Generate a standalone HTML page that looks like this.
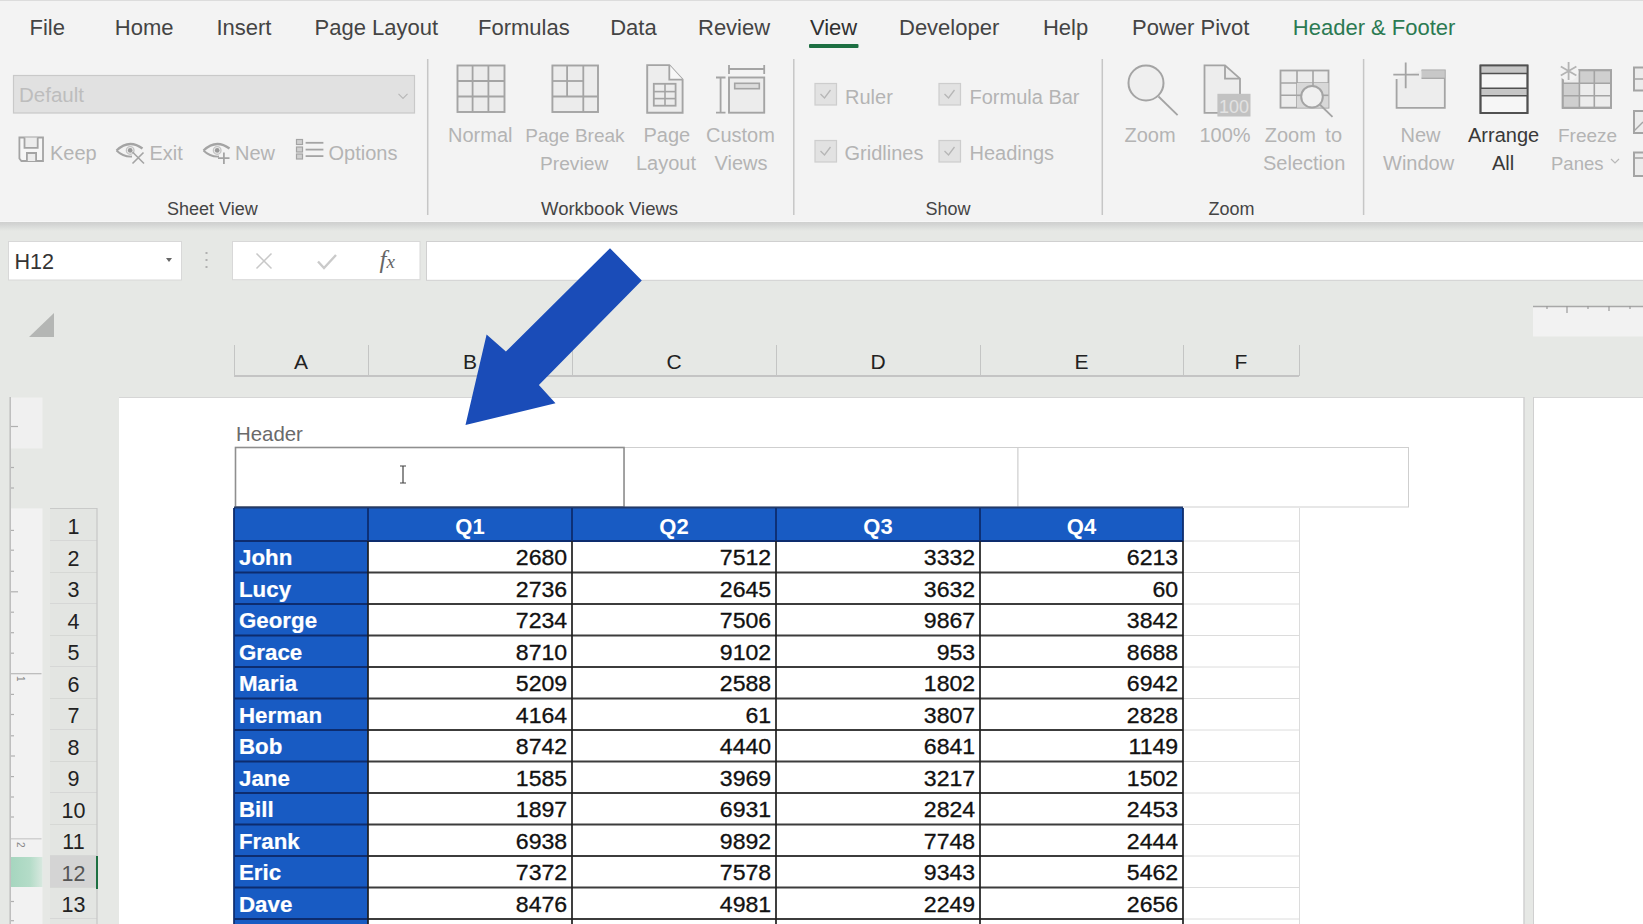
<!DOCTYPE html>
<html><head><meta charset="utf-8"><title>Excel Page Layout</title>
<style>html,body{margin:0;padding:0;width:1643px;height:924px;overflow:hidden;background:#e6e8e5;} svg{display:block}</style>
</head><body>
<svg width="1643" height="924" viewBox="0 0 1643 924" font-family='"Liberation Sans", sans-serif'><rect x="0" y="0" width="1643" height="924" fill="#e6e8e5" stroke="none" stroke-width="1" />
<rect x="0" y="0" width="1643" height="222" fill="#f3f3f3" stroke="none" stroke-width="1" />
<line x1="0" y1="0.5" x2="1643" y2="0.5" stroke="#dcdcdc" stroke-width="1" />
<defs><linearGradient id="sh" x1="0" y1="0" x2="0" y2="1"><stop offset="0" stop-color="#cfd0cf"/><stop offset="0.25" stop-color="#d3d4d3"/><stop offset="0.6" stop-color="#dcdedc"/><stop offset="1" stop-color="#e6e8e5"/></linearGradient></defs>
<rect x="0" y="222" width="1643" height="9" fill="url(#sh)" stroke="none" stroke-width="1" />
<line x1="0" y1="221.5" x2="1643" y2="221.5" stroke="#f7f7f7" stroke-width="1" />
<text x="29.5" y="35.2" font-size="22" fill="#444444" font-weight="400" text-anchor="start" >File</text>
<text x="114.8" y="35.2" font-size="22" fill="#444444" font-weight="400" text-anchor="start" >Home</text>
<text x="216.4" y="35.2" font-size="22" fill="#444444" font-weight="400" text-anchor="start" >Insert</text>
<text x="314.5" y="35.2" font-size="22" fill="#444444" font-weight="400" text-anchor="start" >Page Layout</text>
<text x="478" y="35.2" font-size="22" fill="#444444" font-weight="400" text-anchor="start" >Formulas</text>
<text x="610.2" y="35.2" font-size="22" fill="#444444" font-weight="400" text-anchor="start" >Data</text>
<text x="698" y="35.2" font-size="22" fill="#444444" font-weight="400" text-anchor="start" >Review</text>
<text x="809.9" y="35.2" font-size="22" fill="#303030" font-weight="400" text-anchor="start" >View</text>
<text x="899" y="35.2" font-size="22" fill="#444444" font-weight="400" text-anchor="start" >Developer</text>
<text x="1042.9" y="35.2" font-size="22" fill="#444444" font-weight="400" text-anchor="start" >Help</text>
<text x="1132" y="35.2" font-size="22" fill="#444444" font-weight="400" text-anchor="start" >Power Pivot</text>
<text x="1292.8" y="35.2" font-size="22" fill="#2b7a52" font-weight="400" text-anchor="start" >Header &amp; Footer</text>
<rect x="809" y="44" width="49.5" height="4" fill="#1d6f42" stroke="none" stroke-width="1" rx="1"/>
<rect x="13.5" y="75.5" width="401" height="37.5" fill="#e1e1e1" stroke="#c9c9c9" stroke-width="1.2" />
<text x="19" y="102.4" font-size="20.5" fill="#bdbdbd" font-weight="400" text-anchor="start" >Default</text>
<path d="M398.5 93.8 L403 98.5 L407.5 93.8" fill="none" stroke="#b8b8b8" stroke-width="1.2" />
<text x="50" y="160" font-size="20" fill="#b4b4b4" font-weight="400" text-anchor="start" >Keep</text>
<text x="149.5" y="160" font-size="20" fill="#b4b4b4" font-weight="400" text-anchor="start" >Exit</text>
<text x="235" y="160" font-size="20" fill="#b4b4b4" font-weight="400" text-anchor="start" >New</text>
<text x="328.5" y="160" font-size="20" fill="#b4b4b4" font-weight="400" text-anchor="start" >Options</text>
<text x="167" y="215.3" font-size="18" fill="#444444" font-weight="400" text-anchor="start" >Sheet View</text>
<line x1="427.7" y1="59" x2="427.7" y2="215" stroke="#c6c6c6" stroke-width="1.5" />
<text x="448" y="142.2" font-size="20" fill="#b4b4b4" font-weight="400" text-anchor="start" >Normal</text>
<text x="525.3" y="142.2" font-size="19" fill="#b4b4b4" font-weight="400" text-anchor="start" >Page Break</text>
<text x="540" y="169.6" font-size="19.2" fill="#b4b4b4" font-weight="400" text-anchor="start" >Preview</text>
<text x="643.5" y="142.2" font-size="20" fill="#b4b4b4" font-weight="400" text-anchor="start" >Page</text>
<text x="636" y="169.6" font-size="20" fill="#b4b4b4" font-weight="400" text-anchor="start" >Layout</text>
<text x="706" y="142.2" font-size="20" fill="#b4b4b4" font-weight="400" text-anchor="start" >Custom</text>
<text x="714.5" y="169.6" font-size="20" fill="#b4b4b4" font-weight="400" text-anchor="start" >Views</text>
<text x="541" y="215" font-size="18.5" fill="#444444" font-weight="400" text-anchor="start" >Workbook Views</text>
<line x1="793.8" y1="59" x2="793.8" y2="215" stroke="#c6c6c6" stroke-width="1.5" />
<rect x="815.0" y="83.5" width="21.5" height="21.5" fill="#e2e2e2" stroke="#cdcdcd" stroke-width="1.2" />
<path d="M820.5 94 L824.5 98 L830.5 90" fill="none" stroke="#b6b6b6" stroke-width="1.3" />
<rect x="939.0" y="83.5" width="21.5" height="21.5" fill="#e2e2e2" stroke="#cdcdcd" stroke-width="1.2" />
<path d="M944.5 94 L948.5 98 L954.5 90" fill="none" stroke="#b6b6b6" stroke-width="1.3" />
<rect x="815.0" y="140.5" width="21.5" height="21.5" fill="#e2e2e2" stroke="#cdcdcd" stroke-width="1.2" />
<path d="M820.5 151 L824.5 155 L830.5 147" fill="none" stroke="#b6b6b6" stroke-width="1.3" />
<rect x="939.0" y="140.5" width="21.5" height="21.5" fill="#e2e2e2" stroke="#cdcdcd" stroke-width="1.2" />
<path d="M944.5 151 L948.5 155 L954.5 147" fill="none" stroke="#b6b6b6" stroke-width="1.3" />
<text x="845" y="103.5" font-size="20" fill="#b4b4b4" font-weight="400" text-anchor="start" >Ruler</text>
<text x="969.5" y="103.5" font-size="20" fill="#b4b4b4" font-weight="400" text-anchor="start" >Formula Bar</text>
<text x="844.5" y="160" font-size="20" fill="#b4b4b4" font-weight="400" text-anchor="start" >Gridlines</text>
<text x="969.5" y="160" font-size="20" fill="#b4b4b4" font-weight="400" text-anchor="start" >Headings</text>
<text x="925.5" y="215" font-size="18" fill="#444444" font-weight="400" text-anchor="start" >Show</text>
<line x1="1102.3" y1="59" x2="1102.3" y2="215" stroke="#c6c6c6" stroke-width="1.5" />
<text x="1124.5" y="142.1" font-size="20" fill="#b4b4b4" font-weight="400" text-anchor="start" >Zoom</text>
<text x="1199.5" y="142.1" font-size="20" fill="#b4b4b4" font-weight="400" text-anchor="start" >100%</text>
<text x="1264.7" y="142.1" font-size="20" fill="#b4b4b4" font-weight="400" text-anchor="start" word-spacing="4">Zoom to</text>
<text x="1263" y="169.6" font-size="20" fill="#b4b4b4" font-weight="400" text-anchor="start" >Selection</text>
<text x="1208.4" y="215" font-size="18" fill="#444444" font-weight="400" text-anchor="start" >Zoom</text>
<line x1="1363.6" y1="59" x2="1363.6" y2="215" stroke="#c6c6c6" stroke-width="1.5" />
<text x="1400.5" y="141.7" font-size="20" fill="#b4b4b4" font-weight="400" text-anchor="start" >New</text>
<text x="1383" y="169.6" font-size="20" fill="#b4b4b4" font-weight="400" text-anchor="start" >Window</text>
<text x="1468" y="141.7" font-size="20" fill="#383838" font-weight="400" text-anchor="start" >Arrange</text>
<text x="1492" y="169.6" font-size="20" fill="#383838" font-weight="400" text-anchor="start" >All</text>
<text x="1558" y="141.7" font-size="19" fill="#b4b4b4" font-weight="400" text-anchor="start" >Freeze</text>
<text x="1551" y="169.6" font-size="18.5" fill="#b4b4b4" font-weight="400" text-anchor="start" >Panes</text>
<path d="M1611 159 L1615 163 L1619 159" fill="none" stroke="#b8b8b8" stroke-width="1.2" />
<rect x="8.5" y="241.5" width="173" height="38.5" fill="#ffffff" stroke="#d8d8d8" stroke-width="1" />
<text x="14.5" y="269.4" font-size="21.6" fill="#333333" font-weight="400" text-anchor="start" >H12</text>
<path d="M166 258 L172 258 L169 262 Z" fill="#666666" stroke="none" stroke-width="1" />
<rect x="205.5" y="252" width="2" height="2" fill="#b0b0b0" stroke="none" stroke-width="1" />
<rect x="205.5" y="259" width="2" height="2" fill="#b0b0b0" stroke="none" stroke-width="1" />
<rect x="205.5" y="266" width="2" height="2" fill="#b0b0b0" stroke="none" stroke-width="1" />
<rect x="232.5" y="241.5" width="187.5" height="38.2" fill="#ffffff" stroke="#d8d8d8" stroke-width="1" />
<rect x="426.5" y="241.5" width="1230" height="38.8" fill="#ffffff" stroke="#d0d0d0" stroke-width="1" />
<path d="M256.5 253.5 L271.5 268.5 M271.5 253.5 L256.5 268.5" fill="none" stroke="#c8c8c8" stroke-width="1.5" />
<path d="M318 261.5 L324 268 L336 255" fill="none" stroke="#cacaca" stroke-width="2.4" />
<text x="379.5" y="267.5" font-size="25" fill="#666666" font-weight="400" text-anchor="start" font-family="Liberation Serif"><tspan font-style="italic">f</tspan><tspan font-style="italic" font-size="19" dx="0">x</tspan></text>
<path d="M29 337 L54 313 L54 337 Z" fill="#b4b6b4" stroke="none" stroke-width="1" />
<rect x="1533" y="306" width="110" height="30.5" fill="#f2f2f2" stroke="none" stroke-width="1" />
<line x1="1533" y1="306.5" x2="1643" y2="306.5" stroke="#a8a8a8" stroke-width="1.5" />
<line x1="1547" y1="306" x2="1547" y2="309" stroke="#9a9a9a" stroke-width="1.2" />
<line x1="1567" y1="306" x2="1567" y2="313" stroke="#9a9a9a" stroke-width="1.2" />
<line x1="1588" y1="306" x2="1588" y2="309" stroke="#9a9a9a" stroke-width="1.2" />
<line x1="1609" y1="306" x2="1609" y2="311" stroke="#9a9a9a" stroke-width="1.2" />
<line x1="1630" y1="306" x2="1630" y2="309" stroke="#9a9a9a" stroke-width="1.2" />
<line x1="234" y1="376" x2="1299" y2="376" stroke="#b8b9b8" stroke-width="1.5" />
<line x1="234.5" y1="345" x2="234.5" y2="376" stroke="#c4c5c4" stroke-width="1" />
<line x1="368.5" y1="345" x2="368.5" y2="376" stroke="#c4c5c4" stroke-width="1" />
<line x1="572.5" y1="345" x2="572.5" y2="376" stroke="#c4c5c4" stroke-width="1" />
<line x1="776.5" y1="345" x2="776.5" y2="376" stroke="#c4c5c4" stroke-width="1" />
<line x1="980.5" y1="345" x2="980.5" y2="376" stroke="#c4c5c4" stroke-width="1" />
<line x1="1183.5" y1="345" x2="1183.5" y2="376" stroke="#c4c5c4" stroke-width="1" />
<line x1="1299.5" y1="345" x2="1299.5" y2="376" stroke="#c4c5c4" stroke-width="1" />
<text x="301.0" y="369.1" font-size="21" fill="#222222" font-weight="400" text-anchor="middle" >A</text>
<text x="470.0" y="369.1" font-size="21" fill="#222222" font-weight="400" text-anchor="middle" >B</text>
<text x="674.0" y="369.1" font-size="21" fill="#222222" font-weight="400" text-anchor="middle" >C</text>
<text x="878.0" y="369.1" font-size="21" fill="#222222" font-weight="400" text-anchor="middle" >D</text>
<text x="1081.5" y="369.1" font-size="21" fill="#222222" font-weight="400" text-anchor="middle" >E</text>
<text x="1241.0" y="369.1" font-size="21" fill="#222222" font-weight="400" text-anchor="middle" >F</text>
<rect x="119" y="397" width="1405" height="527" fill="#ffffff" stroke="none" stroke-width="1" />
<line x1="119" y1="397.5" x2="1524" y2="397.5" stroke="#d6d6d6" stroke-width="1" />
<line x1="1524" y1="397" x2="1524" y2="924" stroke="#d0d0d0" stroke-width="1.5" />
<rect x="1533" y="397" width="110" height="527" fill="#ffffff" stroke="none" stroke-width="1" />
<line x1="1533" y1="397.5" x2="1643" y2="397.5" stroke="#d6d6d6" stroke-width="1" />
<line x1="1533.5" y1="397" x2="1533.5" y2="924" stroke="#d0d0d0" stroke-width="1" />
<line x1="10.2" y1="397" x2="10.2" y2="924" stroke="#bdbdbd" stroke-width="1.5" />
<rect x="11" y="397.5" width="31.5" height="51" fill="#f0f0f0" stroke="none" stroke-width="1" />
<rect x="11" y="508.4" width="31.5" height="416" fill="#f2f2f2" stroke="none" stroke-width="1" />
<defs><linearGradient id="gr" x1="0" y1="0" x2="1" y2="0"><stop offset="0" stop-color="#a6d6bf"/><stop offset="0.6" stop-color="#b4dcc8"/><stop offset="1" stop-color="#d8e8df"/></linearGradient></defs>
<rect x="11" y="857" width="31.5" height="30" fill="url(#gr)" stroke="none" stroke-width="1" />
<line x1="11" y1="673.7" x2="41.5" y2="673.7" stroke="#b8b8b8" stroke-width="1.2" />
<line x1="11" y1="838.8" x2="41.5" y2="838.8" stroke="#c8c8c8" stroke-width="1.2" />
<line x1="11" y1="426.5" x2="18" y2="426.5" stroke="#b0b0b0" stroke-width="1.2" />
<line x1="11" y1="467.5" x2="14" y2="467.5" stroke="#b0b0b0" stroke-width="1.2" />
<line x1="11" y1="488" x2="14" y2="488" stroke="#b0b0b0" stroke-width="1.2" />
<line x1="11" y1="530.4" x2="14" y2="530.4" stroke="#b0b0b0" stroke-width="1.2" />
<line x1="11" y1="550.2" x2="14" y2="550.2" stroke="#b0b0b0" stroke-width="1.2" />
<line x1="11" y1="571.3" x2="14" y2="571.3" stroke="#b0b0b0" stroke-width="1.2" />
<line x1="11" y1="591.8" x2="18" y2="591.8" stroke="#b0b0b0" stroke-width="1.2" />
<line x1="11" y1="612.2" x2="14" y2="612.2" stroke="#b0b0b0" stroke-width="1.2" />
<line x1="11" y1="632.7" x2="14" y2="632.7" stroke="#b0b0b0" stroke-width="1.2" />
<line x1="11" y1="653.2" x2="14" y2="653.2" stroke="#b0b0b0" stroke-width="1.2" />
<line x1="11" y1="694.4" x2="14" y2="694.4" stroke="#b0b0b0" stroke-width="1.2" />
<line x1="11" y1="714.5" x2="14" y2="714.5" stroke="#b0b0b0" stroke-width="1.2" />
<line x1="11" y1="735.8" x2="14" y2="735.8" stroke="#b0b0b0" stroke-width="1.2" />
<line x1="11" y1="756" x2="15" y2="756" stroke="#b0b0b0" stroke-width="1.2" />
<line x1="11" y1="776.6" x2="14" y2="776.6" stroke="#b0b0b0" stroke-width="1.2" />
<line x1="11" y1="797" x2="14" y2="797" stroke="#b0b0b0" stroke-width="1.2" />
<line x1="11" y1="817" x2="14" y2="817" stroke="#b0b0b0" stroke-width="1.2" />
<line x1="11" y1="901.5" x2="14" y2="901.5" stroke="#b0b0b0" stroke-width="1.2" />
<line x1="11" y1="920.7" x2="14" y2="920.7" stroke="#b0b0b0" stroke-width="1.2" />
<text x="0" y="0" font-size="10" fill="#888888" font-weight="400" text-anchor="start" transform="translate(17 676) rotate(90)">1</text>
<text x="0" y="0" font-size="10" fill="#888888" font-weight="400" text-anchor="start" transform="translate(17 842) rotate(90)">2</text>
<rect x="50" y="508" width="47" height="33.0" fill="#e3e5e2" stroke="none" stroke-width="1" />
<line x1="50" y1="541.0" x2="97" y2="541.0" stroke="#c9cac9" stroke-width="1.2" />
<text x="73.5" y="534" font-size="21.5" fill="#222222" font-weight="400" text-anchor="middle" >1</text>
<rect x="50" y="541.0" width="47" height="31.5" fill="#e3e5e2" stroke="none" stroke-width="1" />
<line x1="50" y1="572.5" x2="97" y2="572.5" stroke="#c9cac9" stroke-width="1.2" />
<text x="73.5" y="565.6" font-size="21.5" fill="#222222" font-weight="400" text-anchor="middle" >2</text>
<rect x="50" y="572.5" width="47" height="31.5" fill="#e3e5e2" stroke="none" stroke-width="1" />
<line x1="50" y1="604.0" x2="97" y2="604.0" stroke="#c9cac9" stroke-width="1.2" />
<text x="73.5" y="597.1" font-size="21.5" fill="#222222" font-weight="400" text-anchor="middle" >3</text>
<rect x="50" y="604.0" width="47" height="31.5" fill="#e3e5e2" stroke="none" stroke-width="1" />
<line x1="50" y1="635.5" x2="97" y2="635.5" stroke="#c9cac9" stroke-width="1.2" />
<text x="73.5" y="628.6" font-size="21.5" fill="#222222" font-weight="400" text-anchor="middle" >4</text>
<rect x="50" y="635.5" width="47" height="31.5" fill="#e3e5e2" stroke="none" stroke-width="1" />
<line x1="50" y1="667.0" x2="97" y2="667.0" stroke="#c9cac9" stroke-width="1.2" />
<text x="73.5" y="660.1" font-size="21.5" fill="#222222" font-weight="400" text-anchor="middle" >5</text>
<rect x="50" y="667.0" width="47" height="31.5" fill="#e3e5e2" stroke="none" stroke-width="1" />
<line x1="50" y1="698.5" x2="97" y2="698.5" stroke="#c9cac9" stroke-width="1.2" />
<text x="73.5" y="691.6" font-size="21.5" fill="#222222" font-weight="400" text-anchor="middle" >6</text>
<rect x="50" y="698.5" width="47" height="31.5" fill="#e3e5e2" stroke="none" stroke-width="1" />
<line x1="50" y1="730.0" x2="97" y2="730.0" stroke="#c9cac9" stroke-width="1.2" />
<text x="73.5" y="723.1" font-size="21.5" fill="#222222" font-weight="400" text-anchor="middle" >7</text>
<rect x="50" y="730.0" width="47" height="31.5" fill="#e3e5e2" stroke="none" stroke-width="1" />
<line x1="50" y1="761.5" x2="97" y2="761.5" stroke="#c9cac9" stroke-width="1.2" />
<text x="73.5" y="754.6" font-size="21.5" fill="#222222" font-weight="400" text-anchor="middle" >8</text>
<rect x="50" y="761.5" width="47" height="31.5" fill="#e3e5e2" stroke="none" stroke-width="1" />
<line x1="50" y1="793.0" x2="97" y2="793.0" stroke="#c9cac9" stroke-width="1.2" />
<text x="73.5" y="786.1" font-size="21.5" fill="#222222" font-weight="400" text-anchor="middle" >9</text>
<rect x="50" y="793.0" width="47" height="31.5" fill="#e3e5e2" stroke="none" stroke-width="1" />
<line x1="50" y1="824.5" x2="97" y2="824.5" stroke="#c9cac9" stroke-width="1.2" />
<text x="73.5" y="817.6" font-size="21.5" fill="#222222" font-weight="400" text-anchor="middle" >10</text>
<rect x="50" y="824.5" width="47" height="31.5" fill="#e3e5e2" stroke="none" stroke-width="1" />
<line x1="50" y1="856.0" x2="97" y2="856.0" stroke="#c9cac9" stroke-width="1.2" />
<text x="73.5" y="849.1" font-size="21.5" fill="#222222" font-weight="400" text-anchor="middle" >11</text>
<rect x="50" y="856.0" width="47" height="31.5" fill="#d4d4d4" stroke="none" stroke-width="1" />
<line x1="50" y1="887.5" x2="97" y2="887.5" stroke="#c9cac9" stroke-width="1.2" />
<text x="73.5" y="880.6" font-size="21.5" fill="#555555" font-weight="400" text-anchor="middle" >12</text>
<rect x="50" y="887.5" width="47" height="31.5" fill="#e3e5e2" stroke="none" stroke-width="1" />
<line x1="50" y1="919.0" x2="97" y2="919.0" stroke="#c9cac9" stroke-width="1.2" />
<text x="73.5" y="912.1" font-size="21.5" fill="#222222" font-weight="400" text-anchor="middle" >13</text>
<rect x="50" y="919.0" width="47" height="31.5" fill="#e3e5e2" stroke="none" stroke-width="1" />
<line x1="50" y1="950.5" x2="97" y2="950.5" stroke="#c9cac9" stroke-width="1.2" />
<text x="73.5" y="943.6" font-size="21.5" fill="#222222" font-weight="400" text-anchor="middle" >14</text>
<line x1="50" y1="508.5" x2="97" y2="508.5" stroke="#c9cac9" stroke-width="1" />
<line x1="97" y1="508" x2="97" y2="924" stroke="#c6c7c6" stroke-width="1.2" />
<line x1="97" y1="856" x2="97" y2="889" stroke="#1d6f42" stroke-width="2" />
<text x="236" y="441" font-size="20.4" fill="#6a6a6a" font-weight="400" text-anchor="start" >Header</text>
<rect x="624" y="447.5" width="394" height="59.5" fill="#ffffff" stroke="#cfcfcf" stroke-width="1" />
<rect x="1018" y="447.5" width="390.5" height="59.5" fill="#ffffff" stroke="#cfcfcf" stroke-width="1" />
<rect x="235.5" y="447.5" width="388.5" height="59.5" fill="#ffffff" stroke="#8f8f8f" stroke-width="1.6" />
<path d="M400 466 L406 466 M403 466 L403 483 M400 483 L406 483" fill="none" stroke="#444" stroke-width="1.2" />
<line x1="1183" y1="541.0" x2="1299" y2="541.0" stroke="#dcdcdc" stroke-width="1" />
<line x1="1183" y1="572.5" x2="1299" y2="572.5" stroke="#dcdcdc" stroke-width="1" />
<line x1="1183" y1="604.0" x2="1299" y2="604.0" stroke="#dcdcdc" stroke-width="1" />
<line x1="1183" y1="635.5" x2="1299" y2="635.5" stroke="#dcdcdc" stroke-width="1" />
<line x1="1183" y1="667.0" x2="1299" y2="667.0" stroke="#dcdcdc" stroke-width="1" />
<line x1="1183" y1="698.5" x2="1299" y2="698.5" stroke="#dcdcdc" stroke-width="1" />
<line x1="1183" y1="730.0" x2="1299" y2="730.0" stroke="#dcdcdc" stroke-width="1" />
<line x1="1183" y1="761.5" x2="1299" y2="761.5" stroke="#dcdcdc" stroke-width="1" />
<line x1="1183" y1="793.0" x2="1299" y2="793.0" stroke="#dcdcdc" stroke-width="1" />
<line x1="1183" y1="824.5" x2="1299" y2="824.5" stroke="#dcdcdc" stroke-width="1" />
<line x1="1183" y1="856.0" x2="1299" y2="856.0" stroke="#dcdcdc" stroke-width="1" />
<line x1="1183" y1="887.5" x2="1299" y2="887.5" stroke="#dcdcdc" stroke-width="1" />
<line x1="1183" y1="919.0" x2="1299" y2="919.0" stroke="#dcdcdc" stroke-width="1" />
<line x1="1183" y1="950.5" x2="1299" y2="950.5" stroke="#dcdcdc" stroke-width="1" />
<line x1="1299.5" y1="508" x2="1299.5" y2="924" stroke="#dcdcdc" stroke-width="1" />
<rect x="234" y="508" width="949" height="33" fill="#185bc3" stroke="none" stroke-width="1" />
<rect x="234" y="541" width="134" height="383" fill="#185bc3" stroke="none" stroke-width="1" />
<text x="470.0" y="534.2" font-size="22" fill="#ffffff" font-weight="700" text-anchor="middle" >Q1</text>
<text x="674.0" y="534.2" font-size="22" fill="#ffffff" font-weight="700" text-anchor="middle" >Q2</text>
<text x="878.0" y="534.2" font-size="22" fill="#ffffff" font-weight="700" text-anchor="middle" >Q3</text>
<text x="1081.5" y="534.2" font-size="22" fill="#ffffff" font-weight="700" text-anchor="middle" >Q4</text>
<text x="239" y="565.4" font-size="22.3" fill="#ffffff" font-weight="700" text-anchor="start" stroke="#ffffff" stroke-width="0.2">John</text>
<text transform="translate(567.2 565.4) scale(1.05 1)" x="0" y="0" font-size="22" fill="#111111" stroke="#111111" stroke-width="0.3" text-anchor="end">2680</text>
<text transform="translate(771.2 565.4) scale(1.05 1)" x="0" y="0" font-size="22" fill="#111111" stroke="#111111" stroke-width="0.3" text-anchor="end">7512</text>
<text transform="translate(975.2 565.4) scale(1.05 1)" x="0" y="0" font-size="22" fill="#111111" stroke="#111111" stroke-width="0.3" text-anchor="end">3332</text>
<text transform="translate(1178.2 565.4) scale(1.05 1)" x="0" y="0" font-size="22" fill="#111111" stroke="#111111" stroke-width="0.3" text-anchor="end">6213</text>
<text x="239" y="596.9" font-size="22.3" fill="#ffffff" font-weight="700" text-anchor="start" stroke="#ffffff" stroke-width="0.2">Lucy</text>
<text transform="translate(567.2 596.9) scale(1.05 1)" x="0" y="0" font-size="22" fill="#111111" stroke="#111111" stroke-width="0.3" text-anchor="end">2736</text>
<text transform="translate(771.2 596.9) scale(1.05 1)" x="0" y="0" font-size="22" fill="#111111" stroke="#111111" stroke-width="0.3" text-anchor="end">2645</text>
<text transform="translate(975.2 596.9) scale(1.05 1)" x="0" y="0" font-size="22" fill="#111111" stroke="#111111" stroke-width="0.3" text-anchor="end">3632</text>
<text transform="translate(1178.2 596.9) scale(1.05 1)" x="0" y="0" font-size="22" fill="#111111" stroke="#111111" stroke-width="0.3" text-anchor="end">60</text>
<text x="239" y="628.4" font-size="22.3" fill="#ffffff" font-weight="700" text-anchor="start" stroke="#ffffff" stroke-width="0.2">George</text>
<text transform="translate(567.2 628.4) scale(1.05 1)" x="0" y="0" font-size="22" fill="#111111" stroke="#111111" stroke-width="0.3" text-anchor="end">7234</text>
<text transform="translate(771.2 628.4) scale(1.05 1)" x="0" y="0" font-size="22" fill="#111111" stroke="#111111" stroke-width="0.3" text-anchor="end">7506</text>
<text transform="translate(975.2 628.4) scale(1.05 1)" x="0" y="0" font-size="22" fill="#111111" stroke="#111111" stroke-width="0.3" text-anchor="end">9867</text>
<text transform="translate(1178.2 628.4) scale(1.05 1)" x="0" y="0" font-size="22" fill="#111111" stroke="#111111" stroke-width="0.3" text-anchor="end">3842</text>
<text x="239" y="659.9" font-size="22.3" fill="#ffffff" font-weight="700" text-anchor="start" stroke="#ffffff" stroke-width="0.2">Grace</text>
<text transform="translate(567.2 659.9) scale(1.05 1)" x="0" y="0" font-size="22" fill="#111111" stroke="#111111" stroke-width="0.3" text-anchor="end">8710</text>
<text transform="translate(771.2 659.9) scale(1.05 1)" x="0" y="0" font-size="22" fill="#111111" stroke="#111111" stroke-width="0.3" text-anchor="end">9102</text>
<text transform="translate(975.2 659.9) scale(1.05 1)" x="0" y="0" font-size="22" fill="#111111" stroke="#111111" stroke-width="0.3" text-anchor="end">953</text>
<text transform="translate(1178.2 659.9) scale(1.05 1)" x="0" y="0" font-size="22" fill="#111111" stroke="#111111" stroke-width="0.3" text-anchor="end">8688</text>
<text x="239" y="691.4" font-size="22.3" fill="#ffffff" font-weight="700" text-anchor="start" stroke="#ffffff" stroke-width="0.2">Maria</text>
<text transform="translate(567.2 691.4) scale(1.05 1)" x="0" y="0" font-size="22" fill="#111111" stroke="#111111" stroke-width="0.3" text-anchor="end">5209</text>
<text transform="translate(771.2 691.4) scale(1.05 1)" x="0" y="0" font-size="22" fill="#111111" stroke="#111111" stroke-width="0.3" text-anchor="end">2588</text>
<text transform="translate(975.2 691.4) scale(1.05 1)" x="0" y="0" font-size="22" fill="#111111" stroke="#111111" stroke-width="0.3" text-anchor="end">1802</text>
<text transform="translate(1178.2 691.4) scale(1.05 1)" x="0" y="0" font-size="22" fill="#111111" stroke="#111111" stroke-width="0.3" text-anchor="end">6942</text>
<text x="239" y="722.9" font-size="22.3" fill="#ffffff" font-weight="700" text-anchor="start" stroke="#ffffff" stroke-width="0.2">Herman</text>
<text transform="translate(567.2 722.9) scale(1.05 1)" x="0" y="0" font-size="22" fill="#111111" stroke="#111111" stroke-width="0.3" text-anchor="end">4164</text>
<text transform="translate(771.2 722.9) scale(1.05 1)" x="0" y="0" font-size="22" fill="#111111" stroke="#111111" stroke-width="0.3" text-anchor="end">61</text>
<text transform="translate(975.2 722.9) scale(1.05 1)" x="0" y="0" font-size="22" fill="#111111" stroke="#111111" stroke-width="0.3" text-anchor="end">3807</text>
<text transform="translate(1178.2 722.9) scale(1.05 1)" x="0" y="0" font-size="22" fill="#111111" stroke="#111111" stroke-width="0.3" text-anchor="end">2828</text>
<text x="239" y="754.4" font-size="22.3" fill="#ffffff" font-weight="700" text-anchor="start" stroke="#ffffff" stroke-width="0.2">Bob</text>
<text transform="translate(567.2 754.4) scale(1.05 1)" x="0" y="0" font-size="22" fill="#111111" stroke="#111111" stroke-width="0.3" text-anchor="end">8742</text>
<text transform="translate(771.2 754.4) scale(1.05 1)" x="0" y="0" font-size="22" fill="#111111" stroke="#111111" stroke-width="0.3" text-anchor="end">4440</text>
<text transform="translate(975.2 754.4) scale(1.05 1)" x="0" y="0" font-size="22" fill="#111111" stroke="#111111" stroke-width="0.3" text-anchor="end">6841</text>
<text transform="translate(1178.2 754.4) scale(1.05 1)" x="0" y="0" font-size="22" fill="#111111" stroke="#111111" stroke-width="0.3" text-anchor="end">1149</text>
<text x="239" y="785.9" font-size="22.3" fill="#ffffff" font-weight="700" text-anchor="start" stroke="#ffffff" stroke-width="0.2">Jane</text>
<text transform="translate(567.2 785.9) scale(1.05 1)" x="0" y="0" font-size="22" fill="#111111" stroke="#111111" stroke-width="0.3" text-anchor="end">1585</text>
<text transform="translate(771.2 785.9) scale(1.05 1)" x="0" y="0" font-size="22" fill="#111111" stroke="#111111" stroke-width="0.3" text-anchor="end">3969</text>
<text transform="translate(975.2 785.9) scale(1.05 1)" x="0" y="0" font-size="22" fill="#111111" stroke="#111111" stroke-width="0.3" text-anchor="end">3217</text>
<text transform="translate(1178.2 785.9) scale(1.05 1)" x="0" y="0" font-size="22" fill="#111111" stroke="#111111" stroke-width="0.3" text-anchor="end">1502</text>
<text x="239" y="817.4" font-size="22.3" fill="#ffffff" font-weight="700" text-anchor="start" stroke="#ffffff" stroke-width="0.2">Bill</text>
<text transform="translate(567.2 817.4) scale(1.05 1)" x="0" y="0" font-size="22" fill="#111111" stroke="#111111" stroke-width="0.3" text-anchor="end">1897</text>
<text transform="translate(771.2 817.4) scale(1.05 1)" x="0" y="0" font-size="22" fill="#111111" stroke="#111111" stroke-width="0.3" text-anchor="end">6931</text>
<text transform="translate(975.2 817.4) scale(1.05 1)" x="0" y="0" font-size="22" fill="#111111" stroke="#111111" stroke-width="0.3" text-anchor="end">2824</text>
<text transform="translate(1178.2 817.4) scale(1.05 1)" x="0" y="0" font-size="22" fill="#111111" stroke="#111111" stroke-width="0.3" text-anchor="end">2453</text>
<text x="239" y="848.9" font-size="22.3" fill="#ffffff" font-weight="700" text-anchor="start" stroke="#ffffff" stroke-width="0.2">Frank</text>
<text transform="translate(567.2 848.9) scale(1.05 1)" x="0" y="0" font-size="22" fill="#111111" stroke="#111111" stroke-width="0.3" text-anchor="end">6938</text>
<text transform="translate(771.2 848.9) scale(1.05 1)" x="0" y="0" font-size="22" fill="#111111" stroke="#111111" stroke-width="0.3" text-anchor="end">9892</text>
<text transform="translate(975.2 848.9) scale(1.05 1)" x="0" y="0" font-size="22" fill="#111111" stroke="#111111" stroke-width="0.3" text-anchor="end">7748</text>
<text transform="translate(1178.2 848.9) scale(1.05 1)" x="0" y="0" font-size="22" fill="#111111" stroke="#111111" stroke-width="0.3" text-anchor="end">2444</text>
<text x="239" y="880.4" font-size="22.3" fill="#ffffff" font-weight="700" text-anchor="start" stroke="#ffffff" stroke-width="0.2">Eric</text>
<text transform="translate(567.2 880.4) scale(1.05 1)" x="0" y="0" font-size="22" fill="#111111" stroke="#111111" stroke-width="0.3" text-anchor="end">7372</text>
<text transform="translate(771.2 880.4) scale(1.05 1)" x="0" y="0" font-size="22" fill="#111111" stroke="#111111" stroke-width="0.3" text-anchor="end">7578</text>
<text transform="translate(975.2 880.4) scale(1.05 1)" x="0" y="0" font-size="22" fill="#111111" stroke="#111111" stroke-width="0.3" text-anchor="end">9343</text>
<text transform="translate(1178.2 880.4) scale(1.05 1)" x="0" y="0" font-size="22" fill="#111111" stroke="#111111" stroke-width="0.3" text-anchor="end">5462</text>
<text x="239" y="911.9" font-size="22.3" fill="#ffffff" font-weight="700" text-anchor="start" stroke="#ffffff" stroke-width="0.2">Dave</text>
<text transform="translate(567.2 911.9) scale(1.05 1)" x="0" y="0" font-size="22" fill="#111111" stroke="#111111" stroke-width="0.3" text-anchor="end">8476</text>
<text transform="translate(771.2 911.9) scale(1.05 1)" x="0" y="0" font-size="22" fill="#111111" stroke="#111111" stroke-width="0.3" text-anchor="end">4981</text>
<text transform="translate(975.2 911.9) scale(1.05 1)" x="0" y="0" font-size="22" fill="#111111" stroke="#111111" stroke-width="0.3" text-anchor="end">2249</text>
<text transform="translate(1178.2 911.9) scale(1.05 1)" x="0" y="0" font-size="22" fill="#111111" stroke="#111111" stroke-width="0.3" text-anchor="end">2656</text>
<line x1="234" y1="541.0" x2="1183" y2="541.0" stroke="#0d2c6e" stroke-width="2" />
<line x1="234" y1="572.5" x2="368" y2="572.5" stroke="#0d2c6e" stroke-width="2" />
<line x1="368" y1="572.5" x2="1183" y2="572.5" stroke="#3c3c3c" stroke-width="1.8" />
<line x1="234" y1="604.0" x2="368" y2="604.0" stroke="#0d2c6e" stroke-width="2" />
<line x1="368" y1="604.0" x2="1183" y2="604.0" stroke="#3c3c3c" stroke-width="1.8" />
<line x1="234" y1="635.5" x2="368" y2="635.5" stroke="#0d2c6e" stroke-width="2" />
<line x1="368" y1="635.5" x2="1183" y2="635.5" stroke="#3c3c3c" stroke-width="1.8" />
<line x1="234" y1="667.0" x2="368" y2="667.0" stroke="#0d2c6e" stroke-width="2" />
<line x1="368" y1="667.0" x2="1183" y2="667.0" stroke="#3c3c3c" stroke-width="1.8" />
<line x1="234" y1="698.5" x2="368" y2="698.5" stroke="#0d2c6e" stroke-width="2" />
<line x1="368" y1="698.5" x2="1183" y2="698.5" stroke="#3c3c3c" stroke-width="1.8" />
<line x1="234" y1="730.0" x2="368" y2="730.0" stroke="#0d2c6e" stroke-width="2" />
<line x1="368" y1="730.0" x2="1183" y2="730.0" stroke="#3c3c3c" stroke-width="1.8" />
<line x1="234" y1="761.5" x2="368" y2="761.5" stroke="#0d2c6e" stroke-width="2" />
<line x1="368" y1="761.5" x2="1183" y2="761.5" stroke="#3c3c3c" stroke-width="1.8" />
<line x1="234" y1="793.0" x2="368" y2="793.0" stroke="#0d2c6e" stroke-width="2" />
<line x1="368" y1="793.0" x2="1183" y2="793.0" stroke="#3c3c3c" stroke-width="1.8" />
<line x1="234" y1="824.5" x2="368" y2="824.5" stroke="#0d2c6e" stroke-width="2" />
<line x1="368" y1="824.5" x2="1183" y2="824.5" stroke="#3c3c3c" stroke-width="1.8" />
<line x1="234" y1="856.0" x2="368" y2="856.0" stroke="#0d2c6e" stroke-width="2" />
<line x1="368" y1="856.0" x2="1183" y2="856.0" stroke="#3c3c3c" stroke-width="1.8" />
<line x1="234" y1="887.5" x2="368" y2="887.5" stroke="#0d2c6e" stroke-width="2" />
<line x1="368" y1="887.5" x2="1183" y2="887.5" stroke="#3c3c3c" stroke-width="1.8" />
<line x1="234" y1="919.0" x2="368" y2="919.0" stroke="#0d2c6e" stroke-width="2" />
<line x1="368" y1="919.0" x2="1183" y2="919.0" stroke="#3c3c3c" stroke-width="1.8" />
<line x1="234" y1="950.5" x2="368" y2="950.5" stroke="#0d2c6e" stroke-width="2" />
<line x1="368" y1="950.5" x2="1183" y2="950.5" stroke="#3c3c3c" stroke-width="1.8" />
<line x1="234" y1="507.5" x2="1183" y2="507.5" stroke="#223a6a" stroke-width="2" />
<line x1="234" y1="541" x2="234" y2="924" stroke="#0d2c6e" stroke-width="1.7" />
<line x1="368" y1="541" x2="368" y2="924" stroke="#1e1e1e" stroke-width="1.7" />
<line x1="572" y1="541" x2="572" y2="924" stroke="#1e1e1e" stroke-width="1.7" />
<line x1="776" y1="541" x2="776" y2="924" stroke="#1e1e1e" stroke-width="1.7" />
<line x1="980" y1="541" x2="980" y2="924" stroke="#1e1e1e" stroke-width="1.7" />
<line x1="1183" y1="541" x2="1183" y2="924" stroke="#1e1e1e" stroke-width="1.7" />
<line x1="234" y1="508" x2="234" y2="541" stroke="#0d2c6e" stroke-width="1.8" />
<line x1="368" y1="508" x2="368" y2="541" stroke="#0d2c6e" stroke-width="1.8" />
<line x1="572" y1="508" x2="572" y2="541" stroke="#0d2c6e" stroke-width="1.8" />
<line x1="776" y1="508" x2="776" y2="541" stroke="#0d2c6e" stroke-width="1.8" />
<line x1="980" y1="508" x2="980" y2="541" stroke="#0d2c6e" stroke-width="1.8" />
<line x1="1183" y1="508" x2="1183" y2="541" stroke="#0d2c6e" stroke-width="1.8" />
<path d="M465.5 425 L555.5 403.2 L538.9 385 L641.8 280.5 L610 248.2 L505.9 351.6 L486.6 334.5 Z" fill="#1a4cb8" stroke="none" stroke-width="1" />
<path d="M19.4 137.5 L43 137.5 L43 161 L21.4 161 L19.4 158.5 Z" fill="#f6f6f6" stroke="#a4a4a4" stroke-width="1.8" />
<path d="M24.5 137.5 L24.5 147.8 L37.7 147.8 L37.7 137.5" fill="#ececec" stroke="#a4a4a4" stroke-width="1.8" />
<path d="M26.9 161 L26.9 153 L36.1 153 L36.1 161" fill="#ececec" stroke="#a4a4a4" stroke-width="1.8" />
<path d="M116.5 150.5 Q129 138.5 142.5 148.5" fill="none" stroke="#a4a4a4" stroke-width="2.3" />
<path d="M116.5 150.5 Q123 157 132 156.5" fill="none" stroke="#a4a4a4" stroke-width="1.8" />
<circle cx="130.2" cy="150.4" r="3.8" fill="none" stroke="#c4c4c4" stroke-width="1.4"/>
<circle cx="130.2" cy="150.4" r="2.4" fill="#999999"/>
<path d="M132.5 152 L144 163.5 M143.5 152.5 L132.5 163.5" fill="none" stroke="#a4a4a4" stroke-width="1.6" />
<path d="M203.5 150.5 Q216 138.5 229.5 148.5" fill="none" stroke="#a4a4a4" stroke-width="2.3" />
<path d="M203.5 150.5 Q210 157 219 156.5" fill="none" stroke="#a4a4a4" stroke-width="1.8" />
<circle cx="217.2" cy="150.4" r="3.8" fill="none" stroke="#c4c4c4" stroke-width="1.4"/>
<circle cx="217.2" cy="150.4" r="2.4" fill="#999999"/>
<path d="M223.9 152.5 L223.9 164 M218 158.2 L229.5 158.2" fill="none" stroke="#a4a4a4" stroke-width="1.8" />
<rect x="296.5" y="139.5" width="6" height="5" fill="#d0d0d0" stroke="#a4a4a4" stroke-width="1.2" />
<rect x="296.5" y="147" width="6" height="5" fill="#d0d0d0" stroke="#a4a4a4" stroke-width="1.2" />
<rect x="296.5" y="154" width="6" height="5" fill="#d0d0d0" stroke="#a4a4a4" stroke-width="1.2" />
<line x1="305.6" y1="142.8" x2="323.4" y2="142.8" stroke="#a4a4a4" stroke-width="1.8" />
<line x1="305.6" y1="149.6" x2="323.4" y2="149.6" stroke="#a4a4a4" stroke-width="1.8" />
<line x1="305.6" y1="156.1" x2="323.4" y2="156.1" stroke="#a4a4a4" stroke-width="1.8" />
<rect x="457.5" y="65.5" width="47" height="46.5" fill="#ececec" stroke="#a4a4a4" stroke-width="1.9" />
<line x1="472.6" y1="65.5" x2="472.6" y2="112" stroke="#a4a4a4" stroke-width="1.8" />
<line x1="488.4" y1="65.5" x2="488.4" y2="112" stroke="#a4a4a4" stroke-width="1.8" />
<line x1="457.5" y1="81" x2="504.5" y2="81" stroke="#a4a4a4" stroke-width="1.8" />
<line x1="457.5" y1="96.5" x2="504.5" y2="96.5" stroke="#a4a4a4" stroke-width="1.8" />
<rect x="552.4" y="65.5" width="45.6" height="46.5" fill="#ececec" stroke="#a4a4a4" stroke-width="1.9" />
<line x1="567.1" y1="65.5" x2="567.1" y2="96.5" stroke="#a4a4a4" stroke-width="1.8" />
<line x1="552.4" y1="81" x2="583.3" y2="81" stroke="#a4a4a4" stroke-width="1.8" />
<line x1="583.3" y1="65.5" x2="583.3" y2="112" stroke="#a4a4a4" stroke-width="1.8" />
<line x1="552.4" y1="96.5" x2="598" y2="96.5" stroke="#a4a4a4" stroke-width="1.8" />
<path d="M647.2 65.1 L669.3 65.1 L682.6 79.6 L682.6 112.7 L647.2 112.7 Z" fill="#ededed" stroke="#a4a4a4" stroke-width="1.9" />
<path d="M669.3 65.1 L669.3 79.6 L682.6 79.6" fill="#f8f8f8" stroke="#a4a4a4" stroke-width="1.8" />
<rect x="653.8" y="83.8" width="21.8" height="21.9" fill="#ececec" stroke="#a4a4a4" stroke-width="1.8" />
<line x1="665" y1="83.8" x2="665" y2="105.7" stroke="#a4a4a4" stroke-width="1.6" />
<line x1="653.8" y1="91.6" x2="675.6" y2="91.6" stroke="#a4a4a4" stroke-width="1.6" />
<line x1="653.8" y1="98.6" x2="675.6" y2="98.6" stroke="#a4a4a4" stroke-width="1.6" />
<path d="M720.6 77.5 L720.6 112.7 M716 77.5 L725.5 77.5 M716 112.7 L725.5 112.7" fill="none" stroke="#a4a4a4" stroke-width="1.8" />
<path d="M729 69 L764.2 69 M729 64.9 L729 74 M764.2 64.9 L764.2 74" fill="none" stroke="#a4a4a4" stroke-width="1.8" />
<rect x="729" y="77.5" width="35.2" height="35.2" fill="#ececec" stroke="#a4a4a4" stroke-width="1.9" />
<rect x="734.7" y="83.3" width="24.6" height="5.4" fill="#dcdcdc" stroke="#a4a4a4" stroke-width="1.6" />
<circle cx="1146" cy="83" r="17.5" fill="#efefef" stroke="#a4a4a4" stroke-width="2"/>
<line x1="1158.5" y1="96.5" x2="1177.6" y2="115.2" stroke="#a4a4a4" stroke-width="1.8" />
<path d="M1204.5 65.4 L1225 65.4 L1240 78.7 L1240 112.8 L1204.5 112.8 Z" fill="#ededed" stroke="#a4a4a4" stroke-width="1.8" />
<path d="M1225 65.4 L1225 78.7 L1240 78.7" fill="none" stroke="#a4a4a4" stroke-width="1.8" />
<rect x="1217.4" y="93.8" width="33.1" height="22.7" fill="#c2c2c2" stroke="none" stroke-width="1" />
<text x="1234" y="112.5" font-size="17.5" fill="#e2e2e2" font-weight="400" text-anchor="middle" textLength="30" lengthAdjust="spacingAndGlyphs">100</text>
<rect x="1280.5" y="70.5" width="48" height="37.2" fill="#ececec" stroke="#a4a4a4" stroke-width="1.8" />
<line x1="1297" y1="70.5" x2="1297" y2="107.7" stroke="#a4a4a4" stroke-width="1.6" />
<line x1="1313" y1="70.5" x2="1313" y2="107.7" stroke="#a4a4a4" stroke-width="1.6" />
<line x1="1280.5" y1="83" x2="1328.5" y2="83" stroke="#a4a4a4" stroke-width="1.6" />
<line x1="1280.5" y1="95.3" x2="1328.5" y2="95.3" stroke="#a4a4a4" stroke-width="1.6" />
<rect x="1297" y="83" width="31.5" height="24.7" fill="#d8d8d8" stroke="none" stroke-width="1" />
<line x1="1313" y1="83" x2="1313" y2="107.7" stroke="#a4a4a4" stroke-width="1.6" />
<line x1="1297" y1="95.3" x2="1328.5" y2="95.3" stroke="#a4a4a4" stroke-width="1.6" />
<circle cx="1312" cy="96.7" r="10.8" fill="#f0f0f0" stroke="#a4a4a4" stroke-width="2"/>
<line x1="1319.8" y1="104.5" x2="1332.5" y2="116.8" stroke="#a4a4a4" stroke-width="1.8" />
<path d="M1396.6 79 L1396.6 107.8 L1444.8 107.8 L1444.8 70.3 L1421.5 70.3" fill="#ededed" stroke="#a4a4a4" stroke-width="1.8" />
<rect x="1421.5" y="70.3" width="23.3" height="8" fill="#c8c8c8" stroke="none" stroke-width="1" />
<line x1="1421.5" y1="78.3" x2="1444.8" y2="78.3" stroke="#a4a4a4" stroke-width="1.2" />
<path d="M1405.7 62.5 L1405.7 88.2 M1393.3 74.6 L1419 74.6" fill="none" stroke="#a4a4a4" stroke-width="1.8" />
<rect x="1480.5" y="65.5" width="47" height="47.5" fill="#f6f6f6" stroke="#505050" stroke-width="1.8" />
<rect x="1480.5" y="65.5" width="47" height="8" fill="#c6c6c6" stroke="none" stroke-width="1" />
<line x1="1480.5" y1="73.5" x2="1527.5" y2="73.5" stroke="#505050" stroke-width="1.6" />
<rect x="1480.5" y="88.2" width="47" height="7.5" fill="#c6c6c6" stroke="none" stroke-width="1" />
<line x1="1480.5" y1="88.2" x2="1527.5" y2="88.2" stroke="#505050" stroke-width="1.6" />
<line x1="1480.5" y1="95.7" x2="1527.5" y2="95.7" stroke="#505050" stroke-width="1.5" />
<rect x="1480.5" y="65.5" width="47" height="47.5" fill="none" stroke="#505050" stroke-width="1.8" />
<rect x="1562.8" y="70.3" width="48.2" height="37.5" fill="#ececec" stroke="#a4a4a4" stroke-width="2" />
<rect x="1579.4" y="70.3" width="31.6" height="12.9" fill="#cfcfcf" stroke="none" stroke-width="1" />
<rect x="1562.8" y="83.2" width="16.6" height="24.6" fill="#cfcfcf" stroke="none" stroke-width="1" />
<rect x="1562.8" y="70.3" width="48.2" height="37.5" fill="none" stroke="#a4a4a4" stroke-width="2" />
<line x1="1579.4" y1="70.3" x2="1579.4" y2="107.8" stroke="#a4a4a4" stroke-width="1.6" />
<line x1="1594.3" y1="70.3" x2="1594.3" y2="107.8" stroke="#a4a4a4" stroke-width="1.6" />
<line x1="1562.8" y1="83.2" x2="1611" y2="83.2" stroke="#a4a4a4" stroke-width="1.6" />
<line x1="1562.8" y1="95.7" x2="1611" y2="95.7" stroke="#a4a4a4" stroke-width="1.6" />
<circle cx="1568.6" cy="71" r="10" fill="#f3f3f3"/>
<path d="M1568.6 62 L1568.6 80 M1560.8 66.5 L1576.4 75.5 M1560.8 75.5 L1576.4 66.5" fill="none" stroke="#b4b4b4" stroke-width="1.8" />
<rect x="1634" y="67.5" width="12" height="23" fill="#ececec" stroke="#a4a4a4" stroke-width="2" />
<line x1="1634" y1="79" x2="1643" y2="79" stroke="#a4a4a4" stroke-width="1.5" />
<rect x="1634" y="111" width="12" height="22" fill="#ececec" stroke="#a4a4a4" stroke-width="2" />
<path d="M1634 131 L1643 122" fill="none" stroke="#a4a4a4" stroke-width="1.5" />
<rect x="1634" y="152.5" width="12" height="23.5" fill="#ececec" stroke="#a4a4a4" stroke-width="2" />
<line x1="1634" y1="158" x2="1643" y2="158" stroke="#a4a4a4" stroke-width="1.5" /></svg>
</body></html>
